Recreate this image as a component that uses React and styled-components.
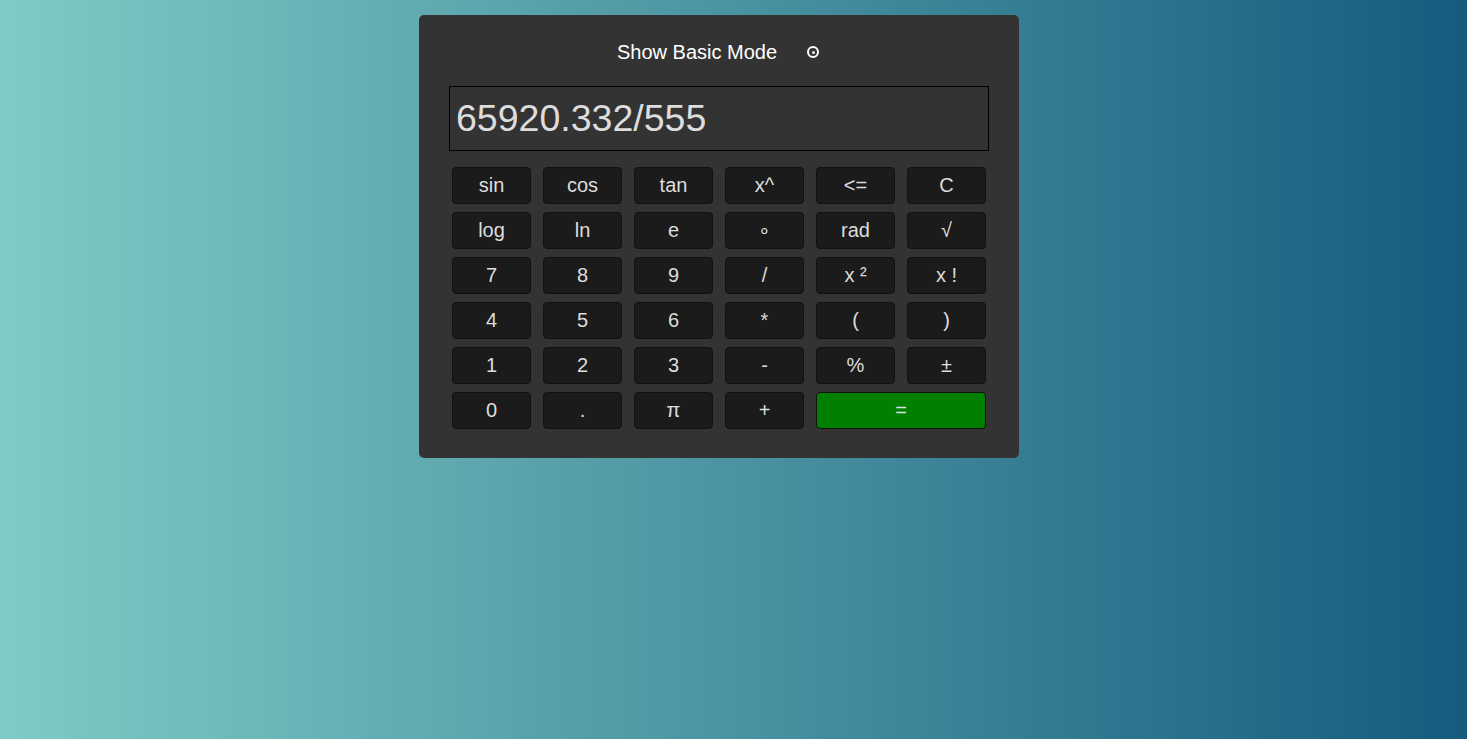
import React, { useState } from 'react'
import styled, { createGlobalStyle } from 'styled-components'

const GlobalStyle = createGlobalStyle`
  html, body {
    margin: 0;
    min-height: 100vh;
  }
  body {
    background: linear-gradient(to right, #7fcbc5, #155b7e);
    font-family: "Liberation Sans", Arial, sans-serif;
  }
`

const Page = styled.div`
  display: flex;
  justify-content: center;
  align-items: flex-start;
  padding: 15px 29px 0 0;
  min-height: 100vh;
  box-sizing: border-box;
`

const Card = styled.div`
  width: 600px;
  box-sizing: border-box;
  background: #333333;
  border-radius: 5px;
  padding: 24px 30px 29px;
  display: flex;
  flex-direction: column;
  align-items: center;
`

const ModeRow = styled.div`
  display: flex;
  align-items: center;
  gap: 30px;
  height: 26px;
  margin-left: -2px;
`

const ModeLabel = styled.span`
  color: #ffffff;
  font-size: 20px;
`

const Toggle = styled.span`
  width: 8px;
  height: 8px;
  border: 2px solid #ffffff;
  border-radius: 50%;
  display: flex;
  align-items: center;
  justify-content: center;
  &::after {
    content: '';
    width: 3px;
    height: 3px;
    border-radius: 50%;
    background: #ffffff;
  }
`

const Display = styled.div`
  width: 540px;
  height: 65px;
  box-sizing: border-box;
  margin-top: 21px;
  border: 1px solid #000000;
  background: #333333;
  color: #dddddd;
  font-size: 37.5px;
  padding: 0 6px;
  display: flex;
  align-items: center;
`

const Keys = styled.div`
  margin-top: 16px;
  display: grid;
  grid-template-columns: repeat(6, 79px);
  grid-auto-rows: 37px;
  column-gap: 12px;
  row-gap: 8px;
`

const Key = styled.button`
  grid-column: ${p => (p.$wide ? 'span 2' : 'auto')};
  background: ${p => (p.$accent ? '#008000' : '#1b1b1b')};
  border: 1px solid #111111;
  border-radius: 4px;
  color: #dddddd;
  font-family: "Liberation Sans", Arial, sans-serif;
  font-size: 20px;
  padding: 0;
  cursor: pointer;
  display: flex;
  align-items: center;
  justify-content: center;
`

const keys = [
  'sin', 'cos', 'tan', 'x^', '<=', 'C',
  'log', 'ln', 'e', '∘', 'rad', '√',
  '7', '8', '9', '/', 'x ²', 'x !',
  '4', '5', '6', '*', '(', ')',
  '1', '2', '3', '-', '%', '±',
  '0', '.', 'π', '+',
]

const App = () => {
  const [value] = useState('65920.332/555')

  return (
    <>
      <GlobalStyle />
      <Page>
        <Card>
          <ModeRow>
            <ModeLabel>Show Basic Mode</ModeLabel>
            <Toggle />
          </ModeRow>
          <Display>{value}</Display>
          <Keys>
            {keys.map(k => (
              <Key key={k}>{k}</Key>
            ))}
            <Key $wide $accent>=</Key>
          </Keys>
        </Card>
      </Page>
    </>
  )
}

export default App
